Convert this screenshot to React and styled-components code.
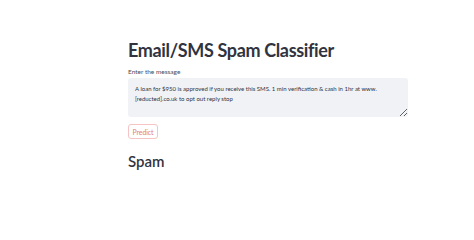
import React from "react";
import styled, { createGlobalStyle } from "styled-components";

const Global = createGlobalStyle`
  html, body { margin: 0; padding: 0; background: #ffffff; }
  body { font-family: Lato, "Noto Sans", sans-serif; color: #31333f; }
`;

const Main = styled.main`
  display: flex;
  flex-direction: column;
  width: 280px;
  margin-left: 128px;
  padding-top: 38px;
`;

const Title = styled.h1`
  margin: 0;
  font-size: 18px;
  line-height: 24px;
  font-weight: 700;
  letter-spacing: -0.35px;
  color: #31333f;
`;

const Label = styled.label`
  display: block;
  margin-top: 6px;
  font-size: 6.5px;
  line-height: 8px;
  font-weight: 400;
  color: #4a4c57;
`;

const Area = styled.textarea`
  box-sizing: border-box;
  margin-top: 2px;
  width: 280px;
  height: 39px;
  padding: 6px 7px;
  border: none;
  border-radius: 3px;
  background: #f0f2f6;
  font-family: Lato, "Noto Sans", sans-serif;
  font-size: 6px;
  line-height: 9.5px;
  color: #31333f;
  resize: vertical;
  outline: none;
`;

const Button = styled.button`
  align-self: flex-start;
  margin-top: 7px;
  box-sizing: border-box;
  width: 30px;
  height: 15px;
  padding: 0;
  border: 1px solid #f5c4c4;
  border-radius: 3px;
  background: #ffffff;
  font-family: Lato, "Noto Sans", sans-serif;
  font-size: 6.8px;
  color: #e27a7d;
`;

const Result = styled.h2`
  margin: 12px 0 0;
  font-size: 15px;
  line-height: 20px;
  font-weight: 600;
  color: #31333f;
`;

export default function App() {
  return (
    <>
      <Global />
      <Main>
        <Title>Email/SMS Spam Classifier</Title>
        <Label htmlFor="msg">Enter the message</Label>
        <Area
          id="msg"
          readOnly
          defaultValue={"A loan for $950 is approved if you receive this SMS. 1 min verification & cash in 1hr at www.\n[reducted].co.uk to opt out reply stop"}
        />
        <Button>Predict</Button>
        <Result>Spam</Result>
      </Main>
    </>
  );
}
